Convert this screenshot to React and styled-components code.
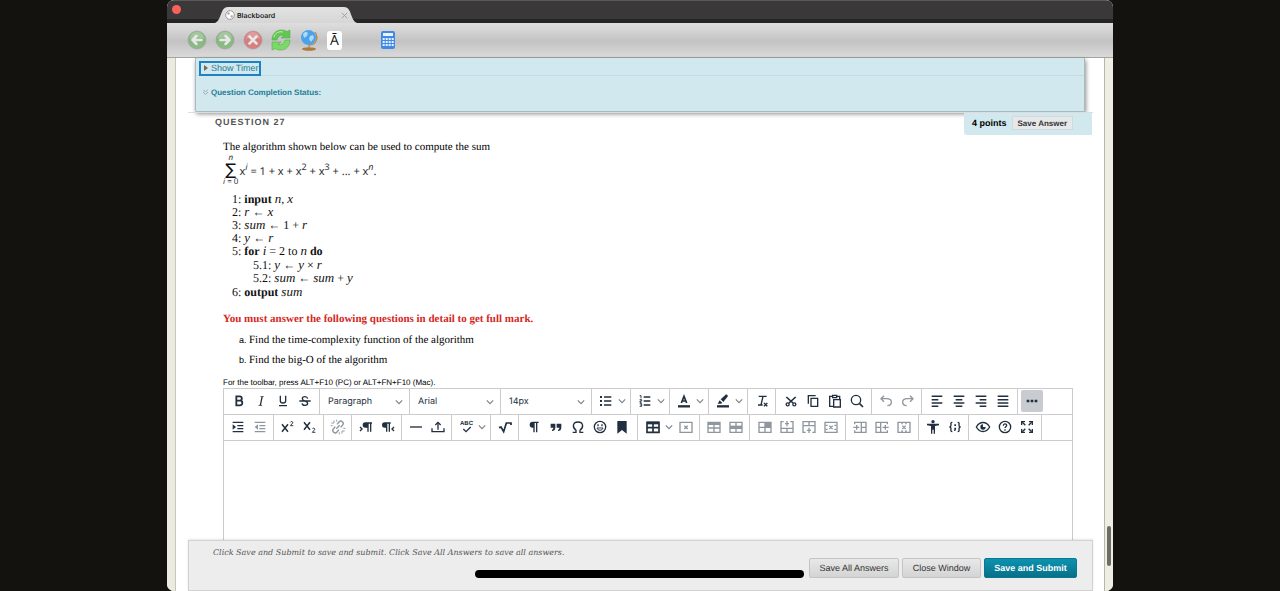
import React from 'react'

import styled, { createGlobalStyle } from 'styled-components'

const GlobalStyle = createGlobalStyle`
    * {
        box-sizing: border-box;
    }
    body {
        margin: 0;
        background-color: #13120f;
        font-family: "Liberation Sans", Arial, sans-serif;
        font-size: 9px;
        color: #000;
        text-rendering: geometricPrecision;
    }
    button, select {
        font-family: inherit;
        font-size: inherit;
        color: inherit;
        text-rendering: inherit;
        margin: 0;
        padding: 0;
        border: 0;
        background: none;
    }
`

const Desktop = styled.div`
    height: 100vh;
    padding: 0 167px;
`

const Window = styled.div`
    height: 100%;
    display: flex;
    flex-direction: column;
    overflow: hidden;
    border-radius: 7px;
    background-color: #fff;
`

const TitleBar = styled.div`
    flex: none;
    height: 23px;
    display: flex;
    align-items: flex-end;
    background: linear-gradient(#3b3839 18px, #262525 18px);
    border-top: 1px solid #5b5858;
`

const CloseDot = styled.button`
    align-self: flex-start;
    width: 9px;
    height: 9px;
    margin: 4px 34px 0 5px;
    border-radius: 50%;
    background-color: #fc605b;
`

const Tab = styled.div`
    width: 142px;
    height: 16px;
    padding: 0 9px 0 10px;
    display: flex;
    align-items: center;
    gap: 2px;
    background: linear-gradient(#e2e2e2, #d6d6d6);
    clip-path: path("M0 16 C7 13 5 0 13 0 H129 C137 0 135 13 142 16 Z");
    font-family: Inter, sans-serif;
    font-size: 7px;
    font-weight: 600;
    color: #222;
    span {
        flex: 1;
    }
    button {
        color: #999;
        display: flex;
    }
`

const NavBar = styled.div`
    flex: none;
    height: 35px;
    padding: 0 19px;
    display: flex;
    align-items: center;
    gap: 6px;
    background: linear-gradient(#dedede, #c3c3c3 55%, #dadada);
    border-bottom: 1px solid #a4a59a;
`

const NavButton = styled.button`
    width: 22px;
    height: 22px;
    display: flex;
    align-items: center;
    justify-content: center;
    opacity: ${props => props.$faded ? 0.6 : 1};
    margin-left: ${props => props.$apart ? '28px' : '0'};
`

const Accent = styled.button`
    width: 15px;
    height: 19px;
    margin: 0 1px;
    border-radius: 3px;
    background-color: #fff;
    font-family: "Open Sans", sans-serif;
    font-size: 14px;
    line-height: 19px;
    color: #111;
`

const Viewport = styled.div`
    flex: 1;
    min-height: 0;
    display: flex;
`

const Gutter = styled.div`
    flex: none;
    width: 9px;
    background-color: #ecebe1;
    border-right: 1px solid #c6c5b9;
`

const ScrollTrack = styled.div`
    flex: none;
    width: 9px;
    padding: 0 2px 25px;
    display: flex;
    align-items: flex-end;
    background-color: #efeee5;
    border-left: 1px solid #b7b6aa;
`

const ScrollThumb = styled.div`
    width: 4px;
    height: 40px;
    border-radius: 2px;
    background-color: #6d6c66;
`

const Page = styled.main`
    flex: 1;
    min-width: 0;
    padding: 0 11px 0 12px;
    display: flex;
    flex-direction: column;
`

const TimerPanel = styled.section`
    flex: none;
    height: 54px;
    margin: 0 8px 0 7px;
    background-color: #d1e8ee;
    border: 1px solid #a9b9bd;
    border-top: 0;
    border-radius: 0 0 2px 2px;
    box-shadow: 1px 2px 4px rgba(0,0,0,0.45);
    color: #1f7d97;
`

const TimerRow = styled.div`
    height: 18px;
    padding: 3px 3px 0;
    border-bottom: 1px solid #c0dce4;
`

const TimerToggle = styled.button`
    height: 15px;
    padding: 0 0 2px 3px;
    display: flex;
    align-items: center;
    gap: 3px;
    white-space: nowrap;
    font-size: 9px;
    line-height: 10px;
    border: 2px solid #2080c4;
    &::before {
        content: "";
        border: 3px solid transparent;
        border-left: 4px solid #6f6a55;
        border-right: 0;
    }
`

const StatusToggle = styled.button`
    height: 32px;
    padding-left: 7px;
    display: flex;
    align-items: center;
    gap: 3px;
    font-size: 8px;
    font-weight: bold;
    svg {
        color: #8fa4ab;
    }
`

const QuestionHeader = styled.header`
    flex: none;
    height: 23px;
    display: flex;
    justify-content: space-between;
    border-top: 1px solid #ddd;
    padding: 0 1px 0 27px;
    h3 {
        margin: 0;
        font-size: 9px;
        line-height: 19px;
        letter-spacing: 1px;
        color: #555;
    }
`

const Points = styled.div`
    width: 128px;
    padding: 0 8px 2px;
    display: flex;
    align-items: center;
    gap: 5px;
    background-color: #d1e8ee;
    border-radius: 0 0 0 3px;
    font-weight: bold;
    button {
        height: 14px;
        padding: 0 5px;
        background-color: #e6e8ea;
        border: 1px solid #d4d9db;
        font-size: 8px;
        font-weight: bold;
        color: #333;
        white-space: nowrap;
    }
`

const Question = styled.div`
    flex: 1;
    min-height: 0;
    padding: 5px 20px 0 35px;
    display: flex;
    flex-direction: column;
    font-family: "Liberation Serif", "Times New Roman", serif;
    font-size: 11px;
    line-height: 14px;
    p {
        margin: 0;
    }
`

const Formula = styled.div`
    height: 32px;
    display: flex;
    align-items: center;
    font-family: "Noto Sans", sans-serif;
    font-size: 11px;
    color: #333;
    sup {
        font-size: 9px;
        line-height: 1;
    }
`

const Sum = styled.div`
    display: flex;
    flex-direction: column;
    align-items: center;
    margin-right: 1px;
    font-size: 8px;
    line-height: 8px;
    b {
        font-family: "DejaVu Sans", sans-serif;
        font-size: 16px;
        font-weight: normal;
        line-height: 16px;
        color: #111;
    }
`

const Algorithm = styled.ol`
    list-style: none;
    margin: 7px 0 0;
    padding: 0 0 0 9px;
    font-size: 12px;
    line-height: 13px;
    color: #111;
    ol {
        list-style: none;
        margin: 1px 0;
        padding: 0 0 0 21px;
    }
    i {
        font-size: 13px;
        line-height: 0;
    }
`

const Warning = styled.p`
    && {
        margin-top: 13px;
    }
    font-weight: bold;
    color: #d4281e;
`

const Parts = styled.ol`
    margin: 7px 0 10px;
    padding: 0 0 0 26px;
    list-style: lower-alpha;
    li + li {
        margin-top: 6px;
    }
    li::marker {
        font-family: "Liberation Sans", Arial, sans-serif;
        font-size: 9px;
    }
`

const Hint = styled.p`
    font-family: "Liberation Sans", Arial, sans-serif;
    font-size: 8px;
    line-height: 11px;
`

const Editor = styled.div`
    flex: 1;
    min-height: 0;
    display: flex;
    flex-direction: column;
    border: 1px solid #ccc;
    border-bottom: 0;
    color: #222f3e;
    font-family: Inter, sans-serif;
    font-size: 9px;
`

const ToolRow = styled.div`
    flex: none;
    height: 26px;
    display: flex;
    border-bottom: 1px solid #ccc;
`

const Group = styled.div`
    flex: none;
    width: ${props => Math.max(28, props.$tools * 23 + props.$menus * 12 + 4)}px;
    padding-bottom: 1px;
    display: flex;
    align-items: center;
    justify-content: center;
    border-right: 1px solid ${props => props.$last ? 'transparent' : '#ccc'};
`

const Tool = styled.button`
    width: ${props => props.$split ? '34px' : '22px'};
    height: 22px;
    padding: ${props => props.$split ? '0 0 0 4px' : '0'};
    display: flex;
    align-items: center;
    justify-content: ${props => props.$split ? 'flex-start' : 'center'};
    gap: 4px;
    border-radius: 2px;
    background-color: ${props => props.$active ? '#c8cbcf' : 'transparent'};
    &:disabled {
        color: #8f969e;
    }
`

const Picker = styled.label`
    width: ${props => props.$wide ? '91px' : '90px'};
    padding-right: 6px;
    display: flex;
    align-items: center;
    border-right: 1px solid #ccc;
    select {
        flex: 1;
        min-width: 0;
        padding-left: 8px;
        appearance: none;
        outline: none;
    }
`

const TextArea = styled.textarea`
    flex: 1;
    min-height: 0;
    border: 0;
    resize: none;
    outline: none;
`

const Footer = styled.footer`
    flex: none;
    padding: 6px 15px 12px 24px;
    background-color: #ededed;
    border: 1px solid #d2d2d2;
    box-shadow: 0 -1px 2px rgba(0,0,0,0.1);
    p {
        margin: 0;
        font-family: "DejaVu Serif", Georgia, serif;
        font-style: italic;
        font-size: 8px;
        line-height: 11px;
        color: #555;
    }
`

const Actions = styled.div`
    height: 20px;
    display: flex;
    align-items: flex-end;
    justify-content: flex-end;
    gap: 3px;
`

const Redaction = styled.div`
    width: 329px;
    height: 8px;
    margin-right: 2px;
    border-radius: 4px;
    background-color: #000;
`

const Action = styled.button`
    height: 20px;
    width: ${props => props.$width}px;
    border: 1px solid ${props => props.$primary ? '#0a7791' : '#c4c4c4'};
    border-radius: 2px;
    background: ${props => props.$primary ? 'linear-gradient(#0b93b0, #087089)' : 'linear-gradient(#e8e8e8, #d4d4d4)'};
    font-weight: ${props => props.$primary ? 'bold' : 'normal'};
    color: ${props => props.$primary ? '#fff' : '#333'};
    white-space: nowrap;
`

// 24px grid, filled shapes marked with className "f"
const Glyph = styled.svg`
    flex: none;
    fill: none;
    stroke: currentColor;
    stroke-width: 2;
    .f {
        fill: currentColor;
        stroke: none;
    }
    .thin {
        stroke-width: 1.4;
    }
    text {
        fill: currentColor;
        stroke: none;
        font-family: "Liberation Sans", sans-serif;
        font-weight: bold;
    }
`

const frame = <path d="M3 5h18v15H3z" />

const glyphs = {
    bold: <path d="M8 5h5a3.200 3.200 0 010 6.500H8zM8 11.500h5.500a3.500 3.500 0 010 7H8z" strokeWidth="2.700" />,
    italic: <path className="f" d="M16.700 4.700l-.1.9h-.3c-.6 0-1 0-1.400.3-.3.3-.4.6-.5 1.100l-2.100 9.800v.6c0 .5.4.8 1.400.8h.2l-.2.8H8l.2-.8h.2c1.100 0 1.800-.5 2-1.500l2-9.800.1-.5c0-.6-.4-.8-1.400-.8h-.3l.2-.9h5.800z" />,
    underline: <path d="M8 4v7.500a4 3.500 0 008 0V4M6 19h12" />,
    strike: <path d="M16 8.500C15.500 6.500 14 5.500 12 5.500c-2.500 0-4 1-4 3 0 1.700 1.500 2.700 4 3.500s4 1.400 4 3.500-1.500 3-4 3-4-.8-4.300-3M3.500 12h17" />,
    bullets: <><path d="M9 6h11M9 12h11M9 18h11" /><path d="M3 6h3M3 12h3M3 18h3" strokeWidth="3" /></>,
    numbers: <><path d="M10 6h10M10 12h10M10 18h10" /><path className="thin" d="M4 4h2v4M4 10h3v2H4.500v2H7M4 16h3v4H4M5 18h2" /></>,
    color: <><path d="M3 20h18" strokeWidth="3.500" /><path d="M8 15l4-10 4 10M9.500 12h5" strokeWidth="2.500" /></>,
    marker: <><path d="M3 20h18" strokeWidth="3.500" /><path className="f" d="M7 11l4 4-2 1H4zM8.500 9.500l7-6.500c1-1 2-1 3 0s1 2 0 3l-6 7.500z" /></>,
    clear: <path d="M7 5h12M13.500 5l-3 13M6 18h7M15 15l5 5M20 15l-5 5" />,
    cut: <><path d="M5 6l10 9M19 6L9 15" strokeWidth="2.500" /><circle cx="7" cy="17" r="2.300" /><circle cx="17" cy="17" r="2.300" /></>,
    copy: <path d="M16 4H5v12M9 8h10v12H9z" />,
    paste: <><path d="M9 20H4V5h4M15 5h4v4M10 10h10v11H10z" /><path d="M8.500 3.500h6v3.500h-6z" /></>,
    search: <><circle cx="10.500" cy="10.500" r="7" /><path d="M15.500 15.500l5.500 5.500" strokeWidth="2.500" /></>,
    undo: <path d="M9 4L4.500 8.500 9 13M5 8.500h8c4.500 0 7 2 7 5s-2 5.500-6 5.500" />,
    redo: <path d="M15 4l4.500 4.500L15 13M19 8.500h-8c-4.500 0-7 2-7 5S6 19 10 19" />,
    left: <path d="M4 5h16M4 10h10M4 15h16M4 20h10" strokeWidth="2.300" />,
    center: <path d="M4 5h16M7 10h10M4 15h16M7 20h10" strokeWidth="2.300" />,
    right: <path d="M4 5h16M10 10h10M4 15h16M10 20h10" strokeWidth="2.300" />,
    justify: <path d="M4 5h16M4 10h16M4 15h16M4 20h16" strokeWidth="2.300" />,
    more: <path className="f" d="M4 10h4v4H4zM10 10h4v4h-4zM16 10h4v4h-4z" />,
    indent: <><path d="M4 5h16M11 10h9M11 14.500h9M4 19h16" /><path className="f" d="M4 8l5 4-5 4z" /></>,
    outdent: <><path d="M4 5h16M11 10h9M11 14.500h9M4 19h16" /><path className="f" d="M9 8l-5 4 5 4z" /></>,
    sup: <><path d="M3 8l9 11M12 8L3 19" strokeWidth="2.300" /><path className="thin" d="M15.500 5c1-2 4.500-1.500 3.500 1l-3.500 4h4.500" /></>,
    sub: <><path d="M3 5l9 11M12 5L3 16" strokeWidth="2.300" /><path className="thin" d="M15.500 15c1-2 4.500-1.500 3.500 1l-3.500 4h4.500" /></>,
    unlink: <><path d="M10.500 8l3-3.500a3.500 3.500 0 015.500 4.500l-3 3.500M13.500 16l-3 3.500A3.500 3.500 0 015 15l3-3.500M9.500 14.500l5-5" /><path className="thin" d="M6 2v4M2 6h4M18 22v-4M22 18h-4M10 1v3M1 10h3M14 23v-3M23 14h-3" /></>,
    ltr: <><path className="f" d="M11 5h10v2h-1v12h-2V7h-2v12h-2v-6h-3a4 4 0 010-8z" /><path d="M3 12l3 3-3 3" /></>,
    rtl: <><path className="f" d="M7 5h9v2h-1v12h-2V7h-2v12H9v-6H7a4 4 0 010-8z" /><path d="M21 12l-3 3 3 3" /></>,
    hr: <path d="M3 12h18" />,
    upload: <><path d="M3 14v5h18v-5M12 16V5" /><path d="M8 9l4-4 4 4" /></>,
    spell: <><text x="3" y="9" fontSize="9">ABC</text><path d="M8 15l4 4 7-7" /></>,
    root: <path d="M3 13l3-1 4 7L14 6h7v3" strokeWidth="2.600" />,
    pilcrow: <path className="f" d="M10 4h9v2h-2v14h-2V6h-2v14h-2v-7h-1a4.500 4.500 0 010-9z" />,
    quote: <path className="f" d="M4 7h7v6c0 3-2 5-5 5v-2c1.500-.5 2-1.500 2-3H4zM13 7h7v6c0 3-2 5-5 5v-2c1.500-.5 2-1.500 2-3h-4z" />,
    omega: <path d="M4 20h5v-3C2.500 12 4.500 4.500 12 4.500s9.500 7.500 3 12.500v3h5" />,
    smile: <><circle cx="12" cy="12" r="8.500" /><path className="thin" d="M7.500 13.500h9c-.8 4.500-8.200 4.500-9 0z" /><path className="f" d="M8 8h2v3H8zM14 8h2v3h-2z" /></>,
    bookmark: <path className="f" d="M5 3h14v19l-7-5.500L5 22z" />,
    table: <><path d="M3 5h18v15H3zM3 13h18M12 6v14" strokeWidth="2.500" /><path d="M3 6h18" strokeWidth="4" /></>,
    tableX: <>{frame}<path d="M9.500 10l5 5M14.500 10l-5 5" /></>,
    tableHead: <>{frame}<path d="M3 13.500h18M12 8v12" /><path d="M3 7h18" strokeWidth="4" /></>,
    tableRow: <>{frame}<path d="M12 5v15" /><path d="M3 12.500h18" strokeWidth="5" /></>,
    cell: <>{frame}<path d="M3 12.500h18M12 5v15" /><path className="f" d="M12 5h9v8h-9z" /></>,
    rowAbove: <path d="M7 4H3v16h18V4h-4M3 14h18M12 14v6M12 3v8M9 7h6" />,
    rowBelow: <path d="M7 20H3V4h18v16h-4M3 10h18M12 4v6M12 13v8M9 17h6" />,
    rowDelete: <>{frame}<path d="M9.500 10l5 5M14.500 10l-5 5M4 9.500h3M4 15.500h3M17 9.500h3M17 15.500h3" /></>,
    colBefore: <path d="M4 8V5h17v15H4v-3M14 5v15M14 12.500h7M2 12.500h9M7 9v7" />,
    colAfter: <path d="M20 8V5H3v15h17v-3M10 5v15M3 12.500h7M13 12.500h9M17 9v7" />,
    colDelete: <>{frame}<path d="M9.500 10l5 5M14.500 10l-5 5M9 5v3M15 5v3M9 17v3M15 17v3" /></>,
    person: <><circle className="f" cx="12" cy="4" r="2.500" /><path className="f" d="M3 7h18v2.500l-6 1V22h-2v-6h-2v6H9V10.500l-6-1z" /></>,
    code: <><path d="M8 5c-3 0-2 2.500-2 4.500S5 12 3.500 12C5 12 6 12.500 6 14.500S5 19 8 19M16 5c3 0 2 2.500 2 4.500s1 2.500 2.500 2.500c-1.500 0-2.500.5-2.500 2.500s1 4.500-2 4.500" /><path className="f" d="M11 8h2.500v2.500H11zM11 13h2.500v3L12 18h-1.500l.5-2z" /></>,
    eye: <><path d="M2 12c5-9 15-9 20 0-5 9-15 9-20 0z" /><path className="f" d="M12 8a4 4 0 104 4h-4z" /></>,
    help: <><circle cx="12" cy="12" r="8.500" /><path d="M9.500 10c0-3.500 5-3.500 5-.5 0 2-2.500 2-2.500 4M12 15.500v2" /></>,
    full: <><path d="M9.500 9.500L5 5M14.500 9.500L19 5M9.500 14.500L5 19M14.500 14.500L19 19" /><path d="M4 9V4h5M15 4h5v5M20 15v5h-5M9 20H4v-5" /></>,
}

const Icon = ({ name, size = 16 }) => (
    <Glyph viewBox="0 0 24 24" width={size} height={size} aria-hidden="true">{glyphs[name]}</Glyph>
)

const Arrow = styled(Glyph)`
    color: #7b828b;
`

const Chevron = () => (
    <Arrow viewBox="0 0 10 10" width="8" height="8" aria-hidden="true">
        <path className="thin" d="M1 3l4 4 4-4" />
    </Arrow>
)

// a leading "-" greys the button out, a trailing "+" gives it a menu arrow
const Tools = ({ names, last }) => {
    const entries = names.split(' ')
    const menus = entries.filter(entry => entry.endsWith('+')).length
    return <Group $tools={entries.length} $menus={menus} $last={last}>
        {entries.map(entry => {
            const name = entry.replace(/[-+]/g, '')
            const split = entry.endsWith('+')
            return <Tool key={name} aria-label={name} disabled={entry.startsWith('-')} $split={split} $active={name === 'more'}>
                <Icon name={name} />
                {split && <Chevron />}
            </Tool>
        })}
    </Group>
}

const Select = ({ label, value, wide }) => (
    <Picker $wide={wide}>
        <select aria-label={label} defaultValue={value}>
            <option>{value}</option>
        </select>
        <Chevron />
    </Picker>
)

const Round = ({ label, color, d }) => (
    <NavButton aria-label={label} $faded>
        <svg viewBox="0 0 20 20" width="20" height="20">
            <circle cx="10" cy="10" r="9" fill={color} stroke="#777" strokeOpacity=".5" />
            <path d="M3 9a7 7 0 0114 0c-4-2-10-2-14 0z" fill="#fff" opacity=".25" />
            <path d={d} fill="none" stroke="#fff" strokeWidth="2.500" strokeLinecap="round" strokeLinejoin="round" />
        </svg>
    </NavButton>
)

const Browser = () => <>
    <TitleBar>
        <CloseDot aria-label="Close" />
        <Tab>
            <svg viewBox="0 0 10 10" width="10" height="10">
                <circle cx="5" cy="5" r="4.300" fill="#fff" stroke="#888" strokeWidth=".8" />
                <path d="M2 3l2-1 1 2-2 1zM5 6l2-1 1 1-1 2z" fill="#aaa" />
            </svg>
            <span>Blackboard</span>
            <button aria-label="Close tab">
                <svg viewBox="0 0 8 8" width="7" height="7">
                    <path d="M1 1l6 6M7 1L1 7" stroke="currentColor" />
                </svg>
            </button>
        </Tab>
    </TitleBar>
    <NavBar>
        <Round label="Back" color="#62b257" d="M14.500 10h-9M9.500 6L5.500 10l4 4" />
        <Round label="Forward" color="#62b257" d="M5.500 10h9M10.500 6l4 4-4 4" />
        <Round label="Stop" color="#e2504f" d="M6.500 6.500l7 7M13.500 6.500l-7 7" />
        <NavButton aria-label="Reload">
            <svg viewBox="0 0 22 22" width="22" height="22">
                <path d="M2 11C2 5 6 1 11 1c3 0 4 .5 6 1.500L20 1v8h-9l3-2.500C11 5.500 8 7 7 11z" fill="#63c853" stroke="#4da544" strokeWidth=".5" />
                <path d="M20 11c0 6-4 10-9 10-3 0-4-.5-6-1.500L2 21v-8h9l-3 2.500c3 1 6-.5 7-4.500z" fill="#7bd968" stroke="#4da544" strokeWidth=".5" />
                <path d="M4 8c1-4 5-6 9-5" fill="none" stroke="#c9f2bd" />
            </svg>
        </NavButton>
        <NavButton aria-label="Home page">
            <svg viewBox="0 0 22 22" width="22" height="22">
                <ellipse cx="11" cy="20" rx="7" ry="1.800" fill="#ad7a3d" />
                <path d="M17 3c4 6 1 13-6 13v3" fill="none" stroke="#b98a4a" strokeWidth="1.300" />
                <circle cx="10.500" cy="8.500" r="7.500" fill="#4ba1ea" />
                <path d="M5 5c2-3 4-2 5-1l-1 3-3 2zM12 7l3-1 1 3-3 4-2-3z" fill="#a9dbfb" />
            </svg>
        </NavButton>
        <Accent>Ā</Accent>
        <NavButton aria-label="Calculator" $apart>
            <svg viewBox="0 0 22 22" width="22" height="22">
                <rect x="4" y="2" width="14" height="18" rx="2" fill="#3f8ae6" />
                <rect x="6" y="4" width="10" height="3" fill="#e8f3ff" />
                {[9, 12, 15].map(y => [6, 9, 12, 15].map(x =>
                    <rect key={x + '-' + y} x={x - 0.3} y={y} width="2" height="2" fill="#e8f3ff" />
                ))}
            </svg>
        </NavButton>
    </NavBar>
</>

export default function App() {
    return <Desktop>
        <GlobalStyle />
        <Window>
            <Browser />
            <Viewport>
                <Gutter />
                <Page>
                    <TimerPanel>
                        <TimerRow>
                            <TimerToggle>Show Timer</TimerToggle>
                        </TimerRow>
                        <StatusToggle>
                            <svg viewBox="0 0 6 6" width="5" height="6">
                                <path d="M0 0l3 3 3-3M0 3l3 3 3-3" fill="none" stroke="currentColor" />
                            </svg>
                            Question Completion Status:
                        </StatusToggle>
                    </TimerPanel>
                    <QuestionHeader>
                        <h3>QUESTION 27</h3>
                        <Points>
                            <span>4 points</span>
                            <button>Save Answer</button>
                        </Points>
                    </QuestionHeader>
                    <Question>
                        <p>The algorithm shown below can be used to compute the sum</p>
                        <Formula>
                            <Sum>
                                <i>n</i>
                                <b>∑</b>
                                <span><i>i</i> = 0</span>
                            </Sum>
                            <span>x<sup><i>i</i></sup> = 1 + x + x<sup>2</sup> + x<sup>3</sup> + ... + x<sup><i>n</i></sup>.</span>
                        </Formula>
                        <Algorithm>
                            <li>1: <b>input</b> <i>n</i>, <i>x</i></li>
                            <li>2: <i>r</i> ← <i>x</i></li>
                            <li>3: <i>sum</i> ← 1 + <i>r</i></li>
                            <li>4: <i>y</i> ← <i>r</i></li>
                            <li>5: <b>for</b> <i>i</i> = 2 to <i>n</i> <b>do</b>
                                <ol>
                                    <li>5.1: <i>y</i> ← <i>y</i> × <i>r</i></li>
                                    <li>5.2: <i>sum</i> ← <i>sum</i> + <i>y</i></li>
                                </ol>
                            </li>
                            <li>6: <b>output</b> <i>sum</i></li>
                        </Algorithm>
                        <Warning>You must answer the following questions in detail to get full mark.</Warning>
                        <Parts>
                            <li>Find the time-complexity function of the algorithm</li>
                            <li>Find the big-O of the algorithm</li>
                        </Parts>
                        <Hint>For the toolbar, press ALT+F10 (PC) or ALT+FN+F10 (Mac).</Hint>
                        <Editor>
                            <ToolRow>
                                <Tools names="bold italic underline strike" />
                                <Select label="Block" value="Paragraph" />
                                <Select label="Font" value="Arial" wide />
                                <Select label="Font size" value="14px" wide />
                                <Tools names="bullets+" />
                                <Tools names="numbers+" />
                                <Tools names="color+" />
                                <Tools names="marker+" />
                                <Tools names="clear" />
                                <Tools names="cut copy paste search" />
                                <Tools names="-undo -redo" />
                                <Tools names="left center right justify" />
                                <Tools names="more" last />
                            </ToolRow>
                            <ToolRow>
                                <Tools names="indent -outdent" />
                                <Tools names="sup sub" />
                                <Tools names="-unlink" />
                                <Tools names="ltr rtl" />
                                <Tools names="hr upload" />
                                <Tools names="spell+" />
                                <Tools names="root" />
                                <Tools names="pilcrow quote omega smile bookmark" />
                                <Tools names="table+ -tableX" />
                                <Tools names="-tableHead -tableRow" />
                                <Tools names="-cell -rowAbove -rowBelow -rowDelete" />
                                <Tools names="-colBefore -colAfter -colDelete" />
                                <Tools names="person code" />
                                <Tools names="eye help full" />
                            </ToolRow>
                            <TextArea aria-label="Answer" />
                        </Editor>
                    </Question>
                    <Footer>
                        <p>Click Save and Submit to save and submit. Click Save All Answers to save all answers.</p>
                        <Actions>
                            <Redaction />
                            <Action $width={90}>Save All Answers</Action>
                            <Action $width={79}>Close Window</Action>
                            <Action $width={93} $primary>Save and Submit</Action>
                        </Actions>
                    </Footer>
                </Page>
                <ScrollTrack>
                    <ScrollThumb />
                </ScrollTrack>
            </Viewport>
        </Window>
    </Desktop>
}
